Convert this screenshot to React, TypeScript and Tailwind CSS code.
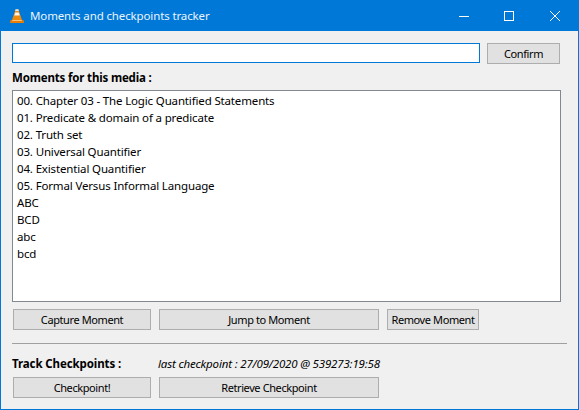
const items = [
  "00. Chapter 03 - The Logic Quantified Statements",
  "01. Predicate & domain of a predicate",
  "02. Truth set",
  "03. Universal Quantifier",
  "04. Existential Quantifier",
  "05. Formal Versus Informal Language",
  "ABC",
  "BCD",
  "abc",
  "bcd",
];

function Btn({ w, children }: { w: string; children: string }) {
  return (
    <button className={`${w} h-[21px] shrink-0 border border-[#adadad] bg-[#e1e1e1] text-[11px] leading-[19px] tracking-[-0.4px] whitespace-nowrap text-black text-center`}>
      {children}
    </button>
  );
}

function Cone() {
  return (
    <svg width="16" height="16" viewBox="0 0 16 16">
      <path d="M6.6 1.5 H9.4 L13 12 H3 Z" fill="#f08a0c" />
      <path d="M6.2 4.4 H9.8 L10.7 7.6 H5.3 Z" fill="#f4f4f4" />
      <path d="M6.6 1.2 H9.4 L9.9 3 H6.1 Z" fill="#e9e4da" />
      <path d="M1.5 12 H14.5 L15 14.4 Q15 15 14 15 H2 Q1 15 1 14.4 Z" fill="#e87d06" />
      <path d="M3 12 H13 L12.6 13 H3.4 Z" fill="#f9c27a" />
    </svg>
  );
}

export default function App() {
  return (
    <div
      className="w-[579px] h-[410px] flex flex-col border border-[#0078d7] border-t-0 bg-[#f0f0f0] text-black overflow-hidden"
      style={{ fontFamily: '"Noto Sans", "Open Sans", sans-serif' }}
    >
      <div className="h-[31px] shrink-0 bg-[#0078d7] flex items-center text-white">
        <div className="ml-[8px] w-[16px] flex"><Cone /></div>
        <span className="ml-[5px] text-[11.5px] leading-[16px] tracking-[-0.13px] text-[#eaf4fc]">Moments and checkpoints tracker</span>
        <div className="ml-auto flex items-center">
          <svg width="12" height="12" viewBox="0 0 12 12" className="mr-[33px]">
            <path d="M1 6.5 H11" stroke="#fff" strokeWidth="1" />
          </svg>
          <svg width="12" height="12" viewBox="0 0 12 12" className="mr-[34px]">
            <rect x="1.5" y="1.5" width="9" height="9" fill="none" stroke="#fff" strokeWidth="1" />
          </svg>
          <svg width="12" height="12" viewBox="0 0 12 12" className="mr-[17px]">
            <path d="M1 1 L11 11 M11 1 L1 11" stroke="#fff" strokeWidth="1" />
          </svg>
        </div>
      </div>

      <div className="flex-1 flex flex-col pl-[11px] pr-[11px]">
        <div className="mt-[12px] h-[21px] flex items-start">
          <input className="w-[468px] h-[20px] border border-[#0078d7] bg-white outline-none" />
          <div className="ml-[7px] flex"><Btn w="w-[73px]">Confirm</Btn></div>
        </div>

        <div className="mt-[6px] h-[16px] text-[11.5px] leading-[16px] font-bold tracking-[-0.17px]">Moments for this media :</div>

        <div className="mt-[4px] w-[549px] h-[212px] border border-[#828790] bg-white pl-[4px] pt-[1px] shrink-0">
          {items.map((t) => (
            <div key={t} className="h-[17px] text-[11.5px] leading-[17px] tracking-[-0.15px]">{t}</div>
          ))}
        </div>

        <div className="mt-[7px] ml-[1px] flex gap-[8px]">
          <Btn w="w-[138px]">Capture Moment</Btn>
          <Btn w="w-[220px]">Jump to Moment</Btn>
          <Btn w="w-[92px]">Remove Moment</Btn>
        </div>

        <div className="mt-[13px] w-[555px] h-px bg-[#a0a0a0]" />

        <div className="mt-[12px] h-[16px] flex items-center text-[11.5px] leading-[16px]">
          <span className="w-[146px] font-bold tracking-[-0.1px]">Track Checkpoints :</span>
          <span className="italic tracking-[-0.17px]">last checkpoint : 27/09/2020 @ 539273:19:58</span>
        </div>

        <div className="mt-[5px] ml-[1px] flex gap-[8px]">
          <Btn w="w-[138px]">Checkpoint!</Btn>
          <Btn w="w-[220px]">Retrieve Checkpoint</Btn>
        </div>
      </div>
    </div>
  );
}
